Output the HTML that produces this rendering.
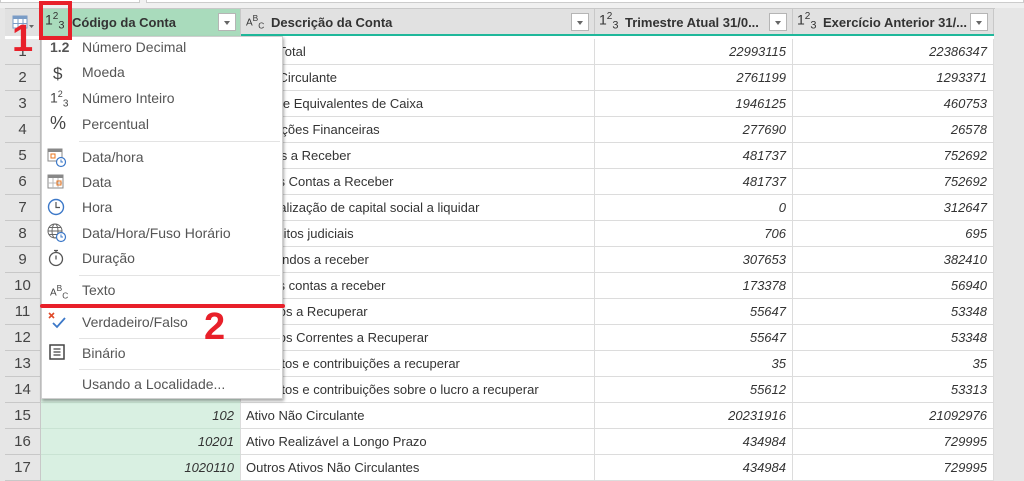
<!DOCTYPE html>
<html><head><meta charset="utf-8"><style>
*{box-sizing:border-box;margin:0;padding:0}
body{width:1024px;height:474px;overflow:hidden;background:#e6e6e6;font-family:"Liberation Sans",sans-serif;position:relative}
.a{position:absolute}
.hdr{top:9px;height:27px;background:#e1e1e1;border-right:1px solid #c8c8c8;font-weight:bold;font-size:13px;color:#333;line-height:27px}
.dd{position:absolute;top:4px;width:18px;height:18px;background:#fff;border:1px solid #b5b5b5}
.dd:after{content:"";position:absolute;left:5px;top:7px;border:3.5px solid transparent;border-top:4px solid #666}
.cell{height:26px;border-bottom:1px solid #dcdcdc;border-right:1px solid #dcdcdc;font-size:13px;line-height:26px;color:#333;white-space:nowrap;overflow:hidden}
.num{text-align:right;padding-right:6px;font-style:italic}
.rn{background:#e6e6e6;text-align:center;color:#444;font-size:15px;border-bottom:1px solid #c8c8c8;border-right:1px solid #c8c8c8}
.menu{left:41px;top:36px;width:242px;height:363px;background:#fff;box-shadow:1px 2px 3px rgba(0,0,0,.35);border:1px solid #cfcfcf}
.mi{position:absolute;left:40px;font-size:14px;color:#555}
.ic{position:absolute;left:8px;font-size:14px;color:#444}
.sep{position:absolute;left:37px;right:2px;height:1px;background:#e3e3e3}
</style></head><body>
<div class="a" style="left:0;top:0;width:1024px;height:8px;background:#f0f0f0"></div>
<div class="a" style="left:0;top:0;width:140px;height:3px;background:#fff;border:1px solid #ccc;border-top:none"></div>
<div class="a" style="left:146px;top:0;width:878px;height:3px;background:#fff;border:1px solid #ccc;border-top:none"></div>
<div class="a" style="left:5px;top:8px;width:990px;height:1px;background:#c8c8c8"></div>

<div class="a hdr" style="left:5px;width:36px"><svg class="a" style="left:7px;top:6px" width="24" height="16"><rect x="1" y="1" width="14" height="12" fill="#fff" stroke="#7a9cc6"/><rect x="1" y="1" width="14" height="3" fill="#7a9cc6"/><path d="M6 4v9M11 4v9M1 8.5h14" stroke="#7a9cc6"/><path d="M17 10l2.5 3 2.5-3z" fill="#666"/></svg></div>
<div class="a hdr" style="left:41px;width:200px;background:#a9dbbc;padding-left:31px">Código da Conta<div class="dd" style="left:177px"></div></div>
<div class="a" style="left:45px;top:11px;font-size:14px;color:#333;font-weight:normal">1<sup style="font-size:10px">2</sup><sub style="font-size:11px">3</sub></div>
<div class="a hdr" style="left:241px;width:354px;padding-left:30px">Descrição da Conta<div class="dd" style="left:330px"></div></div>
<div class="a" style="left:246px;top:13px;font-size:10px;color:#333">A<sup>B</sup><sub>C</sub></div>
<div class="a hdr" style="left:595px;width:198px;padding-left:30px">Trimestre Atual 31/0...<div class="dd" style="left:174px"></div></div>
<div class="a" style="left:599px;top:11px;font-size:14px;color:#333">1<sup style="font-size:10px">2</sup><sub style="font-size:11px">3</sub></div>
<div class="a hdr" style="left:793px;width:201px;padding-left:30px">Exercício Anterior 31/...<div class="dd" style="left:177px"></div></div>
<div class="a" style="left:797px;top:11px;font-size:14px;color:#333">1<sup style="font-size:10px">2</sup><sub style="font-size:11px">3</sub></div>
<div class="a" style="left:241px;top:34px;width:753px;height:4px;background:#1fb89b"></div>
<div class="a" style="left:5px;top:36px;width:989px;height:3px;background:#fff"></div>

<div class="a" style="left:5px;top:39px" id="rows"></div>
<script>
var d=[["1","","Ativo Total","22993115","22386347"],["2","","Ativo Circulante","2761199","1293371"],["3","","Caixa e Equivalentes de Caixa","1946125","460753"],["4","","Aplicações Financeiras","277690","26578"],["5","","Contas a Receber","481737","752692"],["6","","Outras Contas a Receber","481737","752692"],["7","","Integralização de capital social a liquidar","0","312647"],["8","","Depósitos judiciais","706","695"],["9","","Dividendos a receber","307653","382410"],["10","","Outras contas a receber","173378","56940"],["11","","Tributos a Recuperar","55647","53348"],["12","","Tributos Correntes a Recuperar","55647","53348"],["13","","Impostos e contribuições a recuperar","35","35"],["14","","Impostos e contribuições sobre o lucro a recuperar","55612","53313"],["15","102","Ativo Não Circulante","20231916","21092976"],["16","10201","Ativo Realizável a Longo Prazo","434984","729995"],["17","1020110","Outros Ativos Não Circulantes","434984","729995"]];
var h="";d.forEach(function(r,i){var t=i*26;
h+='<div class="a cell rn" style="left:0;top:'+t+'px;width:36px">'+r[0]+'</div>';
h+='<div class="a cell num" style="left:36px;top:'+t+'px;width:200px;background:#d9f0e2;border-bottom-color:#c9e3d3">'+r[1]+'</div>';
h+='<div class="a cell" style="left:236px;top:'+t+'px;width:354px;background:#fff;padding-left:5px">'+r[2]+'</div>';
h+='<div class="a cell num" style="left:590px;top:'+t+'px;width:198px;background:#fff">'+r[3]+'</div>';
h+='<div class="a cell num" style="left:788px;top:'+t+'px;width:201px;background:#fff">'+r[4]+'</div>';});
document.getElementById("rows").innerHTML=h;
</script>

<div class="a menu">
<div class="ic" style="top:2px;font-weight:bold;color:#555">1.2</div><div class="mi" style="top:2px">Número Decimal</div>
<div class="ic" style="top:27px;left:11px;font-size:17px">$</div><div class="mi" style="top:27px">Moeda</div>
<div class="ic" style="top:52px">1<sup style="font-size:9px">2</sup><sub style="font-size:10px">3</sub></div><div class="mi" style="top:53px">Número Inteiro</div>
<div class="ic" style="top:76px;font-size:18px">%</div><div class="mi" style="top:79px">Percentual</div>
<div class="sep" style="top:104px"></div>
<svg class="a" style="left:5px;top:111px" width="20" height="20"><rect x="1" y="1" width="14" height="12" fill="#fff" stroke="#888"/><rect x="1" y="1" width="14" height="3" fill="#888"/><rect x="4" y="6" width="4" height="4" fill="none" stroke="#e8741e"/><circle cx="14" cy="14" r="4.5" fill="#fff" stroke="#3c78c8" stroke-width="1.2"/><path d="M14 11.5v2.5h2" stroke="#3c78c8" fill="none"/></svg>
<div class="mi" style="top:112px">Data/hora</div>
<svg class="a" style="left:5px;top:137px" width="20" height="20"><rect x="1" y="1" width="15" height="13" fill="#fff" stroke="#888"/><rect x="1" y="1" width="15" height="3" fill="#888"/><path d="M6 4v10M11 4v10M1 9h15" stroke="#bbb"/><rect x="10" y="7" width="4" height="4" fill="none" stroke="#e8741e"/></svg>
<div class="mi" style="top:137px">Data</div>
<svg class="a" style="left:5px;top:161px" width="20" height="20"><circle cx="9" cy="9" r="7.5" fill="none" stroke="#3c78c8" stroke-width="1.4"/><path d="M9 4v5.5h4" stroke="#555" fill="none" stroke-width="1.2"/></svg>
<div class="mi" style="top:162px">Hora</div>
<svg class="a" style="left:5px;top:186px" width="20" height="20"><circle cx="8" cy="8" r="7" fill="none" stroke="#666"/><ellipse cx="8" cy="8" rx="3" ry="7" fill="none" stroke="#666"/><path d="M1 8h14M2 4.5h12M2 11.5h12" stroke="#666"/><circle cx="14" cy="14" r="4.5" fill="#fff" stroke="#3c78c8" stroke-width="1.2"/><path d="M14 11.5v2.5h2" stroke="#3c78c8" fill="none"/></svg>
<div class="mi" style="top:188px">Data/Hora/Fuso Horário</div>
<svg class="a" style="left:5px;top:211px" width="20" height="20"><circle cx="9" cy="11" r="6.5" fill="none" stroke="#555" stroke-width="1.3"/><path d="M7 2.5h4M9 3v2M9 7.5v4" stroke="#555" stroke-width="1.3" fill="none"/></svg>
<div class="mi" style="top:213px">Duração</div>
<div class="sep" style="top:238px"></div>
<div class="ic" style="top:246px;font-size:10px">A<sup>B</sup><sub>C</sub></div><div class="mi" style="top:245px">Texto</div>
<svg class="a" style="left:5px;top:274px" width="20" height="20"><path d="M2 2l5 5M7 2l-5 5" stroke="#e04b2a" stroke-width="1.6"/><path d="M6 12l4 4 8-9" stroke="#3c78c8" stroke-width="1.8" fill="none"/></svg>
<div class="mi" style="top:277px">Verdadeiro/Falso</div>
<div class="sep" style="top:301px"></div>
<svg class="a" style="left:7px;top:307px" width="20" height="20"><rect x="1" y="1" width="14" height="14" fill="none" stroke="#444" stroke-width="1.5"/><path d="M4.5 5h7M4.5 8h7M4.5 11h7" stroke="#444" stroke-width="1.2"/></svg>
<div class="mi" style="top:308px">Binário</div>
<div class="sep" style="top:332px"></div>
<div class="mi" style="top:339px">Usando a Localidade...</div>
</div>

<div class="a" style="left:40px;top:304px;width:245px;height:4px;background:#e8202a;border-radius:2px"></div>
<div class="a" style="left:39px;top:1px;width:33px;height:39px;border:4px solid #e8202a"></div>
<div class="a" style="left:12px;top:20px;font-size:38px;font-weight:bold;color:#e8202a;line-height:38px">1</div>
<div class="a" style="left:204px;top:308px;font-size:38px;font-weight:bold;color:#e8202a;line-height:38px">2</div>
</body></html>
